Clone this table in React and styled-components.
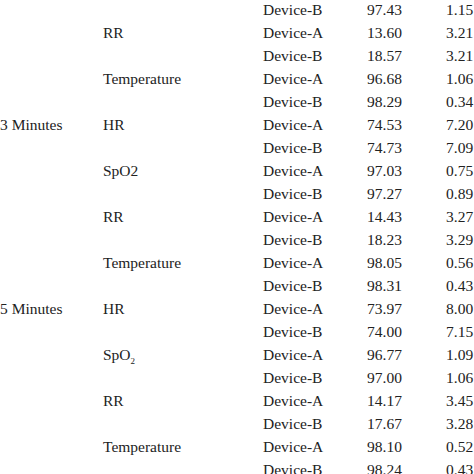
import React from 'react';
import styled, { createGlobalStyle } from 'styled-components';

const GlobalStyle = createGlobalStyle`
  html, body {
    margin: 0;
    padding: 0;
    background: #ffffff;
    overflow: hidden;
  }
`;

const Page = styled.div`
  width: 474px;
  height: 474px;
  overflow: hidden;
  background: #ffffff;
`;

const Table = styled.div`
  margin-top: -2px;
  display: flex;
  flex-direction: column;
  font-family: "Liberation Serif", "Times New Roman", serif;
  font-size: 15.5px;
  color: #222222;
`;

const Row = styled.div`
  display: grid;
  grid-template-columns: 103px 160px 104px 79px 120px;
  height: 23px;
  line-height: 23px;
  white-space: nowrap;
`;

const Cell = styled.div`
  padding-left: ${({ $pad }) => $pad || 0}px;
`;

const Sub = styled.sub`
  font-size: 9px;
  vertical-align: -4px;
  line-height: 0;
`;

const rows = [
  ['', '', 'Device-B', '97.43', '1.15'],
  ['', 'RR', 'Device-A', '13.60', '3.21'],
  ['', '', 'Device-B', '18.57', '3.21'],
  ['', 'Temperature', 'Device-A', '96.68', '1.06'],
  ['', '', 'Device-B', '98.29', '0.34'],
  ['3 Minutes', 'HR', 'Device-A', '74.53', '7.20'],
  ['', '', 'Device-B', '74.73', '7.09'],
  ['', 'SpO2', 'Device-A', '97.03', '0.75'],
  ['', '', 'Device-B', '97.27', '0.89'],
  ['', 'RR', 'Device-A', '14.43', '3.27'],
  ['', '', 'Device-B', '18.23', '3.29'],
  ['', 'Temperature', 'Device-A', '98.05', '0.56'],
  ['', '', 'Device-B', '98.31', '0.43'],
  ['5 Minutes', 'HR', 'Device-A', '73.97', '8.00'],
  ['', '', 'Device-B', '74.00', '7.15'],
  ['', 'SPO2_SUB', 'Device-A', '96.77', '1.09'],
  ['', '', 'Device-B', '97.00', '1.06'],
  ['', 'RR', 'Device-A', '14.17', '3.45'],
  ['', '', 'Device-B', '17.67', '3.28'],
  ['', 'Temperature', 'Device-A', '98.10', '0.52'],
  ['', '', 'Device-B', '98.24', '0.43'],
];

const Param = ({ value }) =>
  value === 'SPO2_SUB' ? (
    <>
      SpO<Sub>2</Sub>
    </>
  ) : (
    value
  );

const App = () => {
  return (
    <Page>
      <GlobalStyle />
      <Table>
        {rows.map((r, i) => (
          <Row key={i}>
            <Cell>{r[0]}</Cell>
            <Cell>
              <Param value={r[1]} />
            </Cell>
            <Cell>{r[2]}</Cell>
            <Cell>{r[3]}</Cell>
            <Cell>{r[4]}</Cell>
          </Row>
        ))}
      </Table>
    </Page>
  );
};

export default App;
